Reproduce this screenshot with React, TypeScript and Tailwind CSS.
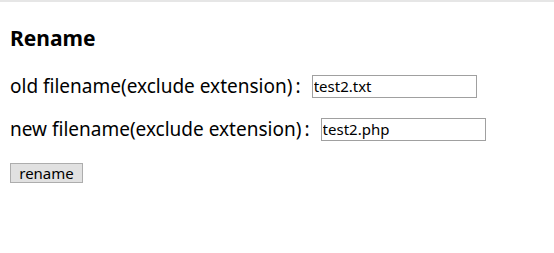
import { useState } from 'react';

export default function App() {
  const [oldName, setOldName] = useState('test2.txt');
  const [newName, setNewName] = useState('test2.php');

  return (
    <div className="min-h-[253px] w-[554px] bg-white border-t-2 border-[#e6e6e6] font-['Noto_Sans',sans-serif] text-black">
      <div className="px-[10px] pt-[22px]">
        <h3 className="text-[21px] font-bold leading-[28px]">Rename</h3>
        <div className="mt-[22px] flex items-center h-[24px]">
          <span className="text-[19px] leading-[24px]">old filename(exclude extension)&thinsp;:</span>
          <input
            value={oldName}
            onChange={(e) => setOldName(e.target.value)}
            className="ml-[11px] w-[165px] h-[23px] border border-[#a0a0a0] px-[1px] text-[15px] font-['Noto_Sans',sans-serif] outline-none"
          />
        </div>
        <div className="mt-[19px] flex items-center h-[24px]">
          <span className="text-[19px] leading-[24px]">new filename(exclude extension)&thinsp;:</span>
          <input
            value={newName}
            onChange={(e) => setNewName(e.target.value)}
            className="ml-[11px] w-[165px] h-[23px] border border-[#a0a0a0] px-[1px] text-[15px] font-['Noto_Sans',sans-serif] outline-none"
          />
        </div>
        <button className="mt-[22px] w-[73px] h-[20px] bg-[#e1e1e1] border border-[#adadad] text-[15px] leading-[16px]">
          rename
        </button>
      </div>
    </div>
  );
}
